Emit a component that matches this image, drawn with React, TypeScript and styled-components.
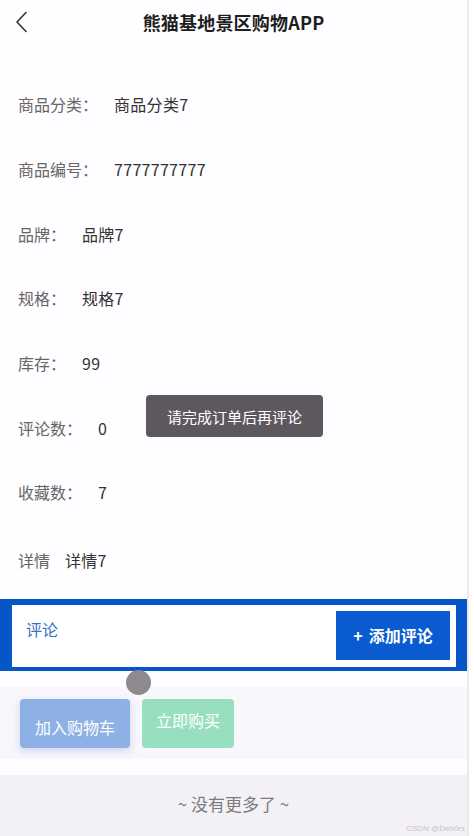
import React from "react";
import styled, { createGlobalStyle } from "styled-components";

const Global = createGlobalStyle`
  html, body { margin: 0; padding: 0; background: #ffffff; }
  body { font-family: "Noto Sans CJK SC", "Noto Sans", sans-serif; }
  * { box-sizing: border-box; }
`;

const Page = styled.div`
  position: relative;
  width: 469px;
  height: 836px;
  background: #fefdff;
  border-right: 2px solid #ebe9ee;
  display: flex;
  flex-direction: column;
  overflow: hidden;
`;

const Header = styled.div`
  height: 44px;
  display: flex;
  align-items: center;
  justify-content: center;
  position: relative;
`;

const Back = styled.div`
  position: absolute;
  left: 14px;
  top: 11px;
  width: 16px;
  height: 22px;
  display: flex;
`;

const Title = styled.h1`
  margin: 0;
  font-size: 18px;
  font-weight: 700;
  color: #1e1e1e;
  line-height: 24px;
  letter-spacing: 0.2px;
`;

const Info = styled.div`
  padding-top: 28px;
  display: flex;
  flex-direction: column;
`;

const Row = styled.div<{ $h?: number }>`
  height: ${(p) => p.$h ?? 64.7}px;
  display: flex;
  align-items: center;
  padding-left: 18px;
  gap: ${(p) => (p.$h ? 15 : 16)}px;
  font-size: 16px;
  line-height: 20px;
`;

const Label = styled.span`
  color: #666666;
`;

const Value = styled.span`
  color: #333333;
  letter-spacing: 0.3px;
`;

const CommentBar = styled.div`
  margin-top: 4px;
  height: 72px;
  background: #0656c8;
  padding: 6px 11px 4px 12px;
  display: flex;
`;

const CommentInner = styled.div`
  flex: 1;
  background: #ffffff;
  display: flex;
  justify-content: space-between;
  padding: 6px 6px 6px 14px;
`;

const CommentTitle = styled.span`
  color: #3b6fc2;
  font-size: 16px;
  line-height: 24px;
  margin-top: 6px;
`;

const AddButton = styled.button`
  width: 114px;
  height: 49px;
  background: #0a5ad0;
  border: none;
  color: #ffffff;
  font-family: inherit;
  font-size: 16px;
  font-weight: 700;
  display: flex;
  align-items: center;
  justify-content: center;
  gap: 6px;
  padding: 0;
`;

const ActionBar = styled.div`
  margin-top: 16px;
  height: 72px;
  background: #f8f7fc;
  display: flex;
  align-items: flex-start;
  gap: 12px;
  padding: 12px 0 0 20px;
`;

const ActionButton = styled.button<{ $bg: string; $w: number; $pt: number; $shadow?: boolean }>`
  width: ${(p) => p.$w}px;
  height: 49px;
  border: none;
  border-radius: 4px;
  background: ${(p) => p.$bg};
  color: #ffffff;
  font-family: inherit;
  font-size: 16px;
  line-height: 20px;
  display: flex;
  justify-content: center;
  align-items: flex-start;
  padding: ${(p) => p.$pt}px 0 0;
  box-shadow: ${(p) => (p.$shadow ? "0 3px 8px rgba(120,150,220,0.35)" : "none")};
`;

const Footer = styled.div`
  margin-top: 16px;
  flex: 1;
  background: #f4f1f6;
  display: flex;
  justify-content: center;
  padding-top: 17px;
  position: relative;
`;

const FooterText = styled.span`
  color: #7b7b7b;
  font-size: 17px;
  line-height: 24px;
`;

const Watermark = styled.span`
  position: absolute;
  right: 2px;
  bottom: 3px;
  font-family: "Liberation Sans", Arial, sans-serif;
  font-size: 8px;
  color: #c4c4c4;
`;

const Toast = styled.div`
  position: absolute;
  left: 146px;
  top: 395px;
  width: 177px;
  height: 42px;
  border-radius: 4px;
  background: #5d585d;
  color: #ffffff;
  font-size: 15px;
  display: flex;
  align-items: center;
  justify-content: center;
`;

const TouchDot = styled.div`
  position: absolute;
  left: 126px;
  top: 670px;
  width: 25px;
  height: 25px;
  border-radius: 50%;
  background: #8d898e;
`;

const rows: [string, string][] = [
  ["商品分类：", "商品分类7"],
  ["商品编号：", "7777777777"],
  ["品牌：", "品牌7"],
  ["规格：", "规格7"],
  ["库存：", "99"],
  ["评论数：", "0"],
  ["收藏数：", "7"],
];

export default function App() {
  return (
    <>
      <Global />
      <Page>
        <Header>
          <Back>
            <svg width="16" height="22" viewBox="0 0 16 22" fill="none">
              <path d="M12 1.5 L3 11 L12 20.5" stroke="#333" strokeWidth="1.6" strokeLinecap="round" strokeLinejoin="round" />
            </svg>
          </Back>
          <Title>熊猫基地景区购物APP</Title>
        </Header>
        <Info>
          {rows.map(([l, v]) => (
            <Row key={l}>
              <Label>{l}</Label>
              <Value>{v}</Value>
            </Row>
          ))}
          <Row $h={70}>
            <Label>详情</Label>
            <Value>详情7</Value>
          </Row>
        </Info>
        <CommentBar>
          <CommentInner>
            <CommentTitle>评论</CommentTitle>
            <AddButton>
              <span>+</span>
              <span>添加评论</span>
            </AddButton>
          </CommentInner>
        </CommentBar>
        <ActionBar>
          <ActionButton $bg="#8db0e5" $w={110} $pt={18} $shadow>加入购物车</ActionButton>
          <ActionButton $bg="#98dfc0" $w={92} $pt={11}>立即购买</ActionButton>
        </ActionBar>
        <Footer>
          <FooterText>~ 没有更多了 ~</FooterText>
          <Watermark>CSDN @Deh0rs</Watermark>
        </Footer>
        <Toast>请完成订单后再评论</Toast>
        <TouchDot />
      </Page>
    </>
  );
}
